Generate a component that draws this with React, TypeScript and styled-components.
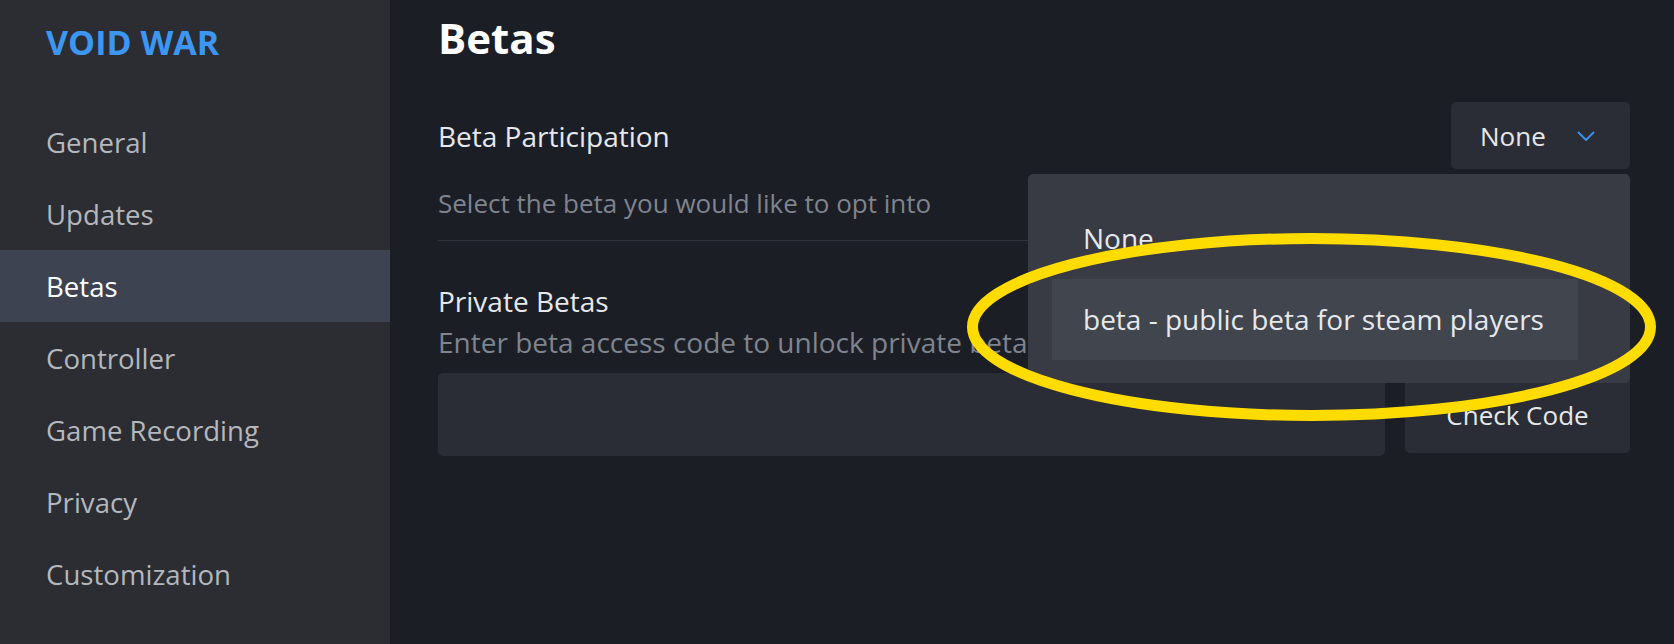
import React from "react";
import styled, { createGlobalStyle } from "styled-components";

const GlobalStyle = createGlobalStyle`
  html, body { margin: 0; padding: 0; height: 100%; background: #1b1e25; }
  #root { height: 100%; }
  * { box-sizing: border-box; }
`;

const Shell = styled.div`
  position: relative;
  display: flex;
  width: 100%;
  height: 644px;
  overflow: hidden;
  background: #1b1e25;
  font-family: "Open Sans", "Noto Sans", sans-serif;
`;

const Sidebar = styled.nav`
  flex: none;
  width: 390px;
  display: flex;
  flex-direction: column;
  background: #2b2d33;
`;

const GameTitle = styled.div`
  margin-top: 20px;
  padding-left: 46px;
  font-size: 34px;
  line-height: 44px;
  font-weight: 700;
  color: #3d96f1;
`;

const NavList = styled.div`
  margin-top: 42px;
  display: flex;
  flex-direction: column;
`;

const NavItem = styled.div<{ $active?: boolean }>`
  height: 72px;
  padding-left: 46px;
  font-size: 27.6px;
  line-height: 72px;
  color: ${(p) => (p.$active ? "#ffffff" : "#b4b7bc")};
  background: ${(p) => (p.$active ? "#3d4350" : "transparent")};
`;

const Main = styled.main`
  flex: 1;
  display: flex;
  flex-direction: column;
  padding: 14px 44px 0 48px;
`;

const Heading = styled.h1`
  margin: 0;
  font-size: 42px;
  line-height: 48px;
  font-weight: 700;
  color: #ffffff;
`;

const Section = styled.section`
  margin-top: 40px;
  padding-bottom: 21px;
  border-bottom: 1px solid #2f333b;
`;

const SettingRow = styled.div`
  display: flex;
  align-items: center;
  justify-content: space-between;
`;

const Label = styled.div`
  font-size: 28px;
  line-height: 38px;
  color: #e6e8ec;
`;

const Hint = styled.div<{ $size: number }>`
  font-size: ${(p) => p.$size}px;
  line-height: ${(p) => (p.$size > 27 ? 38 : 32)}px;
  color: #7f848e;
`;

const SelectWrap = styled.div`
  position: relative;
`;

const SelectButton = styled.div`
  width: 179px;
  height: 67px;
  display: flex;
  align-items: center;
  justify-content: space-between;
  padding: 0 35px 0 29px;
  border-radius: 5px;
  background: #2a2d35;
  font-size: 26px;
  color: #e6e8ec;
`;

const Menu = styled.div`
  position: absolute;
  top: calc(100% + 5px);
  right: 0;
  width: 602px;
  padding: 24px 52px 23px 24px;
  border-radius: 5px;
  background: #383b44;
  z-index: 2;
`;

const MenuItem = styled.div<{ $hover?: boolean }>`
  height: 81px;
  padding-left: 31px;
  font-size: 28px;
  line-height: 81px;
  color: #e6e8ec;
  white-space: nowrap;
  background: ${(p) => (p.$hover ? "#41454e" : "transparent")};
`;

const PrivateSection = styled.section`
  margin-top: 41px;
  display: flex;
  flex-direction: column;
`;

const CodeRow = styled.div`
  margin-top: 12px;
  display: flex;
  align-items: center;
  gap: 20px;
`;

const CodeInput = styled.div`
  flex: 1;
  height: 83px;
  border-radius: 5px;
  background: #2a2d35;
`;

const CheckButton = styled.div`
  width: 225px;
  height: 77px;
  display: flex;
  align-items: center;
  justify-content: center;
  border-radius: 5px;
  background: #2a2d35;
  font-size: 26px;
  color: #e6e8ec;
`;

const Highlight = styled.svg`
  position: absolute;
  left: 960px;
  top: 230px;
  pointer-events: none;
  z-index: 5;
`;

const Chevron = () => (
  <svg width="18" height="10" viewBox="0 0 18 10" fill="none">
    <polyline points="1,1 9,9 17,1" stroke="#3d8fe8" strokeWidth="2" />
  </svg>
);

const navItems = [
  "General",
  "Updates",
  "Betas",
  "Controller",
  "Game Recording",
  "Privacy",
  "Customization",
];

export default function App() {
  return (
    <>
      <GlobalStyle />
      <Shell>
        <Sidebar>
          <GameTitle>VOID WAR</GameTitle>
          <NavList>
            {navItems.map((n) => (
              <NavItem key={n} $active={n === "Betas"}>
                {n}
              </NavItem>
            ))}
          </NavList>
        </Sidebar>
        <Main>
          <Heading>Betas</Heading>
          <Section>
            <SettingRow>
              <Label>Beta Participation</Label>
              <SelectWrap>
                <SelectButton>
                  <span>None</span>
                  <Chevron />
                </SelectButton>
                <Menu>
                  <MenuItem>None</MenuItem>
                  <MenuItem $hover>beta - public beta for steam players</MenuItem>
                </Menu>
              </SelectWrap>
            </SettingRow>
            <Hint $size={26} style={{ marginTop: 18 }}>
              Select the beta you would like to opt into
            </Hint>
          </Section>
          <PrivateSection>
            <Label>Private Betas</Label>
            <Hint $size={28} style={{ marginTop: 3 }}>
              Enter beta access code to unlock private betas
            </Hint>
            <CodeRow>
              <CodeInput />
              <CheckButton>Check Code</CheckButton>
            </CodeRow>
          </PrivateSection>
        </Main>
        <Highlight width="710" height="200" viewBox="0 0 710 200">
          <ellipse
            cx="351.5"
            cy="97"
            rx="339"
            ry="88.5"
            fill="none"
            stroke="#ffdc00"
            strokeWidth="11"
          />
        </Highlight>
      </Shell>
    </>
  );
}
